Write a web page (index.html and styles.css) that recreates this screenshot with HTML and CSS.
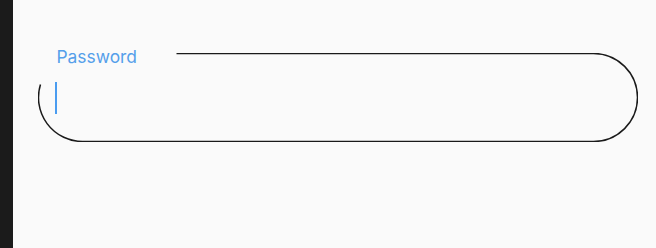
FILE: index.html
```html
<!DOCTYPE html>
<html>
<head>
<meta charset="utf-8">
<link rel="stylesheet" href="styles.css">
</head>
<body>
<div class="page">
  <div class="strip"></div>
  <div class="content">
    <div class="field">
      <svg class="outline" width="600" height="89" viewBox="0 0 600 89">
        <path d="M 138.5 0.5 H 555.5 A 44 44 0 0 1 555.5 88.5 H 44.5 A 44 44 0 0 1 2.47 31.5" fill="none" stroke="#1a1a1a" stroke-width="1.5"/>
      </svg>
      <span class="label">Password</span>
      <span class="cursor"></span>
    </div>
  </div>
</div>
</body>
</html>
```
FILE: styles.css
```css
html, body {
  margin: 0;
  padding: 0;
  background: #fafafa;
}
.page {
  display: flex;
  width: 656px;
  height: 248px;
}
.strip {
  width: 13px;
  background: #1b1b1b;
  flex: none;
}
.content {
  flex: 1;
  padding: 53px 0 0 25px;
}
.field {
  position: relative;
  width: 600px;
  height: 89px;
}
.outline {
  position: absolute;
  left: 0;
  top: 0;
}
.label {
  position: absolute;
  left: 18.5px;
  top: -6.5px;
  font-family: Inter, "Noto Sans", sans-serif;
  font-size: 17.4px;
  font-weight: 420;
  line-height: 20px;
  color: #559fea;
}
.cursor {
  position: absolute;
  left: 16.5px;
  top: 29px;
  width: 2.5px;
  height: 32px;
  background: #4a9cf0;
}
```
